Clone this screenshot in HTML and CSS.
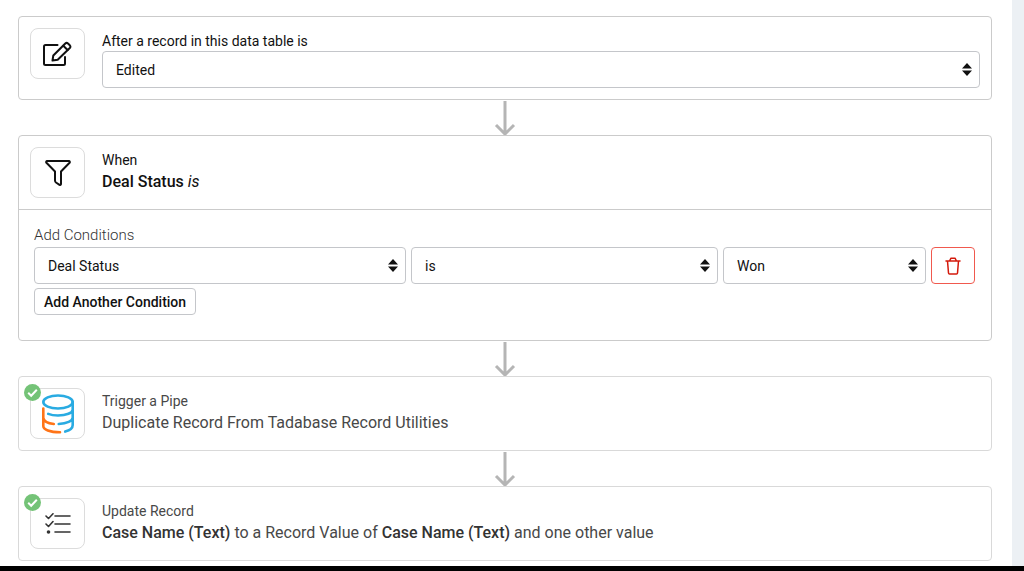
FILE: index.html
```
<!DOCTYPE html>
<html lang="en">
<head>
<meta charset="utf-8">
<meta name="viewport" content="width=device-width, initial-scale=1">
<title>Automation steps</title>
<link rel="stylesheet" href="styles.css">
</head>
<body>
<div class="page">
  <main class="flow">
    <section class="card card-trigger">
      <div class="tile">
        <svg width="30" height="26" viewBox="0 0 30 26" fill="none" stroke="#111" stroke-width="2" stroke-linejoin="round" stroke-linecap="round"><path d="M14.500 4H2.500Q1 4 1 5.500v17Q1 24 2.500 24h18Q22 24 22 22.500V16"/><path d="M9.500 19.500l.8-5L22.300 2.500q1.300-1.200 2.700 0l1.800 1.800q1.200 1.400 0 2.700L14.700 18.800z"/><path d="M20.300 4.700l4.300 4.300"/></svg>
      </div>
      <div class="text">
        <label class="label" for="event">After a record in this data table is</label>
        <div class="select">
          <select id="event"><option>Edited</option></select>
          <svg class="caret" width="10" height="13" viewBox="0 0 10 13"><path d="M0 5.500L5 0l5 5.500zM0 7.500h10L5 13z"/></svg>
        </div>
      </div>
    </section>
    <svg class="arrow" width="22" height="35" viewBox="0 0 22 35"><path d="M11 1v33M2 25l9 9 9-9"/></svg>
    <section class="card">
      <header class="head head-ruled">
        <div class="tile">
          <svg width="28" height="28" viewBox="0 0 28 28" fill="none" stroke="#111" stroke-width="2" stroke-linejoin="round"><path d="M3 2h22q1 0 .8 1.500L17 12.500v12.500q-.5 1.200-1.500.8L12 23.500q-1-.7-1-2v-9L2.200 3.500Q2 2 3 2z"/></svg>
        </div>
        <div class="text">
          <div class="label">When</div>
          <div class="summary"><b>Deal Status</b> <i>is</i></div>
        </div>
      </header>
      <div class="conditions">
        <div class="caption">Add Conditions</div>
        <div class="row">
          <div class="select">
            <select aria-label="Field"><option>Deal Status</option></select>
            <svg class="caret" width="10" height="13" viewBox="0 0 10 13"><path d="M0 5.500L5 0l5 5.500zM0 7.500h10L5 13z"/></svg>
          </div>
          <div class="select">
            <select aria-label="Operator"><option>is</option></select>
            <svg class="caret" width="10" height="13" viewBox="0 0 10 13"><path d="M0 5.500L5 0l5 5.500zM0 7.500h10L5 13z"/></svg>
          </div>
          <div class="select">
            <select aria-label="Value"><option>Won</option></select>
            <svg class="caret" width="10" height="13" viewBox="0 0 10 13"><path d="M0 5.500L5 0l5 5.500zM0 7.500h10L5 13z"/></svg>
          </div>
          <button class="delete" type="button" aria-label="Delete condition">
            <svg width="16" height="18" viewBox="0 0 16 18" fill="none" stroke="#d41a0c" stroke-width="1.500" stroke-linejoin="round" stroke-linecap="round"><path d="M1 4h14M4.500 4l1.500-2.800h4L11.500 4M2.500 4l1 12q.1 1 1 1h7q.9 0 1-1l1-12"/></svg>
          </button>
        </div>
        <button class="add" type="button">Add Another Condition</button>
      </div>
    </section>
    <svg class="arrow" width="22" height="35" viewBox="0 0 22 35"><path d="M11 1v33M2 25l9 9 9-9"/></svg>
    <section class="card head card-done">
      <div class="tile">
        <svg class="badge" width="17" height="17" viewBox="0 0 17 17"><circle cx="8.500" cy="8.500" r="8.500"/><path d="M4.200 8.800l3 3 5.600-6"/></svg>
        <svg width="36" height="42" viewBox="0 0 36 42" fill="none" stroke="#29abe2" stroke-width="2.600" stroke-linecap="round"><ellipse cx="18" cy="9" rx="14.700" ry="6.500"/><path d="M32.700 9v23c0 3-3 5.400-7.500 6.600M32.700 16.500c0 3.500-6.500 6-14.700 6-4 0-7.300-.6-9.800-1.600M32.700 24.500c0 3.500-6 6-14 6.500"/><path stroke="#ff7417" d="M3.300 15.500V33c0 3.500 6.500 6.300 16.700 6.300M3.300 25c.5 3 4.500 5.300 10.500 6"/></svg>
      </div>
      <div class="text">
        <div class="label">Trigger a Pipe</div>
        <div class="summary">Duplicate Record From Tadabase Record Utilities</div>
      </div>
    </section>
    <svg class="arrow" width="22" height="35" viewBox="0 0 22 35"><path d="M11 1v33M2 25l9 9 9-9"/></svg>
    <section class="card head card-done">
      <div class="tile">
        <svg class="badge" width="17" height="17" viewBox="0 0 17 17"><circle cx="8.500" cy="8.500" r="8.500"/><path d="M4.200 8.800l3 3 5.600-6"/></svg>
        <svg width="26" height="22" viewBox="0 0 26 22" fill="none" stroke="#333" stroke-width="1.600" stroke-linecap="round" stroke-linejoin="round"><path d="M10 3h15M10 11h15M10 19h15M1 3l2.500 2.500L8 .8M1 11l2.500 2.500L8 8.500"/><circle cx="3.500" cy="19" r="1.800" fill="#333" stroke="none"/></svg>
      </div>
      <div class="text">
        <div class="label">Update Record</div>
        <div class="summary"><b>Case Name (Text)</b> to a Record Value of <b>Case Name (Text)</b> and one other value</div>
      </div>
    </section>
  </main>
  <div class="gutter"></div>
</div>
<div class="bottom-bar"></div>
</body>
</html>
```
FILE: styles.css
```
* { box-sizing: border-box; }
body {
  margin: 0;
  min-height: 100vh;
  display: flex;
  flex-direction: column;
  background: #fff;
  color: #111;
  font: 14px/20px Roboto, "Liberation Sans", sans-serif;
}
.page { flex: 1; display: flex; }
.flow {
  flex: 1;
  display: flex;
  flex-direction: column;
  padding: 16px 32px 5px 18px;
  margin-right: -12px;
}
.gutter { flex: none; width: 12px; background: #ecf0f4; }
.bottom-bar { flex: none; height: 5px; background: #000; }
.card { border: 1px solid #cbcbcb; border-radius: 4px; }
.card-trigger { display: flex; gap: 17px; padding: 11px; }
.head { display: flex; gap: 17px; padding: 11px; }
.head-ruled { border-bottom: 1px solid #cbcbcb; }
.card-done { border-color: #d9d9d9; color: #484848; }
.card-done b { color: #333; }
.tile {
  position: relative;
  flex: none;
  width: 55px;
  height: 51px;
  display: flex;
  align-items: center;
  justify-content: center;
  border: 1px solid #dcdcdc;
  border-radius: 8px;
}
.badge { position: absolute; left: -7px; top: -5px; fill: #74c377; }
.badge path { fill: none; stroke: #fff; stroke-width: 2; }
.text { flex: 1; padding-top: 3px; }
.label { display: block; }
.summary { margin-top: 1px; font-size: 16px; line-height: 22px; }
b { font-weight: 500; }
.arrow {
  flex: none;
  align-self: center;
  fill: none;
  stroke: #b5b5b5;
  stroke-width: 3;
}
.select { position: relative; }
select {
  appearance: none;
  display: block;
  width: 100%;
  height: 37px;
  padding: 0 28px 0 13px;
  border: 1px solid #c4c6ca;
  border-radius: 4px;
  background: #fff;
  color: #111;
  font: inherit;
}
.caret {
  position: absolute;
  right: 8px;
  top: 12px;
  fill: #111;
  pointer-events: none;
}
.conditions { padding: 15px 16px 25px 15px; }
.caption { margin-bottom: 2px; color: #333; font-size: 15px; font-weight: 300; }
.row { display: grid; grid-template-columns: 372fr 307fr 203fr 44px; gap: 5px; }
.delete {
  display: flex;
  align-items: center;
  justify-content: center;
  padding: 0;
  border: 1px solid #f0594e;
  border-radius: 4px;
  background: #fff;
}
.add {
  margin-top: 4px;
  height: 27px;
  padding: 0 9px;
  border: 1px solid #c4c6ca;
  border-radius: 4px;
  background: #fff;
  color: #111;
  font: inherit;
  font-weight: 500;
}
```
